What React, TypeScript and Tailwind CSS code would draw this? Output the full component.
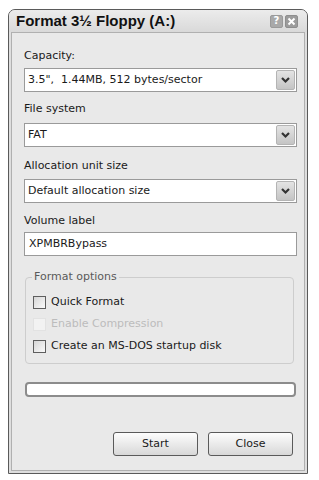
import React from 'react';

const font = { fontFamily: '"DejaVu Sans", Verdana, sans-serif' };

function Chevron() {
  return (
    <svg width="11" height="8" viewBox="0 0 11 8">
      <path d="M2 2 L5.5 5.5 L9 2" fill="none" stroke="#333" strokeWidth="2.2" />
    </svg>
  );
}

function Combo({ value }: { value: string }) {
  return (
    <div className="flex h-[24px] items-stretch border border-[#9a9a9a] bg-white p-[1px]">
      <div className="flex flex-1 items-center whitespace-pre pl-[2px] text-[11px] text-[#1a1a1a]">{value}</div>
      <div className="flex w-[19px] items-center justify-center rounded-[2px] border border-[#b4b4b4] bg-gradient-to-b from-[#e4e4e4] to-[#c4c4c4]">
        <Chevron />
      </div>
    </div>
  );
}

function Label({ text, className }: { text: string; className: string }) {
  return <div className={`h-[14px] text-[11px] leading-[14px] text-[#1a1a1a] ${className}`}>{text}</div>;
}

function Check({ label, disabled }: { label: string; disabled?: boolean }) {
  return (
    <div className="flex h-[22px] items-center">
      <div
        className={`h-[13px] w-[13px] border ${
          disabled ? 'border-[#e2e2e2] bg-[#f2f2f2]' : 'border-[#5e5e5e] bg-gradient-to-br from-[#d6d6d6] to-[#fafafa]'
        }`}
      />
      <span className={`ml-[5px] text-[11px] ${disabled ? 'text-[#bcbcbc]' : 'text-[#1a1a1a]'}`}>{label}</span>
    </div>
  );
}

export default function App() {
  return (
    <div className="h-[480px] w-[319px] bg-white pl-[8px] pt-[9px]" style={font}>
      <div className="flex h-[465px] w-[300px] flex-col overflow-hidden rounded-t-[7px] border border-[#5a5a5a] bg-[#dedede]">
        {/* Title bar */}
        <div className="flex h-[22px] items-center bg-gradient-to-b from-[#ececec] to-[#d9d9d9] pl-[7px] pr-[9px]">
          <span
            className="flex-1 text-[15px] font-bold text-[#111]"
            style={{ fontFamily: '"Liberation Sans", Arial, sans-serif' }}
          >
            Format 3½ Floppy (A:)
          </span>
          <div className="flex gap-[2px]">
            <div className="flex h-[13px] w-[13px] items-center justify-center rounded-[2px] border border-[#9a9a9a] bg-[#a9a9a9] text-[10px] font-bold leading-none text-white">
              ?
            </div>
            <div className="flex h-[13px] w-[13px] items-center justify-center rounded-[2px] border border-[#8e8e8e] bg-[#9c9c9c]">
              <svg width="9" height="9" viewBox="0 0 9 9">
                <path d="M1.5 1.5 L7.5 7.5 M7.5 1.5 L1.5 7.5" stroke="#fff" strokeWidth="2" />
              </svg>
            </div>
          </div>
        </div>

        {/* Body */}
        <div className="flex flex-1 flex-col px-[2px] pb-[2px]">
          <div className="flex flex-1 flex-col border border-[#b0b0b0] bg-[#e9e9e9] pl-[12px] pr-[7px]">
            <Label text="Capacity:" className="mt-[16px]" />
            <div className="mt-[5px]">
              <Combo value={'3.5",  1.44MB, 512 bytes/sector'} />
            </div>
            <Label text="File system" className="mt-[10px]" />
            <div className="mt-[7px]">
              <Combo value="FAT" />
            </div>
            <Label text="Allocation unit size" className="mt-[12px]" />
            <div className="mt-[6px]">
              <Combo value="Default allocation size" />
            </div>
            <Label text="Volume label" className="mt-[11px]" />
            <div className="mt-[4px] flex h-[24px] items-center border border-[#9a9a9a] bg-white pl-[4px] text-[11px] text-[#1a1a1a]">
              XPMBRBypass
            </div>

            {/* Format options */}
            <div className="relative ml-[1px] mr-[3px] mt-[21px] h-[87px] rounded-[4px] border border-[#cdcdcd] pl-[7px] pt-[13px]">
              <span className="absolute left-[6px] top-[-8px] bg-[#e9e9e9] px-[2px] text-[11px] leading-[14px] text-[#5a5a5a]">
                Format options
              </span>
              <Check label="Quick Format" />
              <Check label="Enable Compression" disabled />
              <Check label="Create an MS-DOS startup disk" />
            </div>

            {/* Progress */}
            <div className="ml-[1px] mr-[1px] mt-[18px] h-[15px] rounded-[4px] border-2 border-[#8c8c8c] bg-white" />

            {/* Buttons */}
            <div className="mr-[4px] mt-[35px] flex justify-end gap-[10px]">
              <button className="h-[24px] w-[85px] rounded-[3px] border border-[#5a5a5a] bg-gradient-to-b from-[#fdfdfd] to-[#d8d8d8] text-[11px] text-[#1a1a1a]">
                Start
              </button>
              <button className="h-[24px] w-[85px] rounded-[3px] border border-[#5a5a5a] bg-gradient-to-b from-[#fdfdfd] to-[#d8d8d8] text-[11px] text-[#1a1a1a]">
                Close
              </button>
            </div>
          </div>
        </div>
      </div>
    </div>
  );
}
